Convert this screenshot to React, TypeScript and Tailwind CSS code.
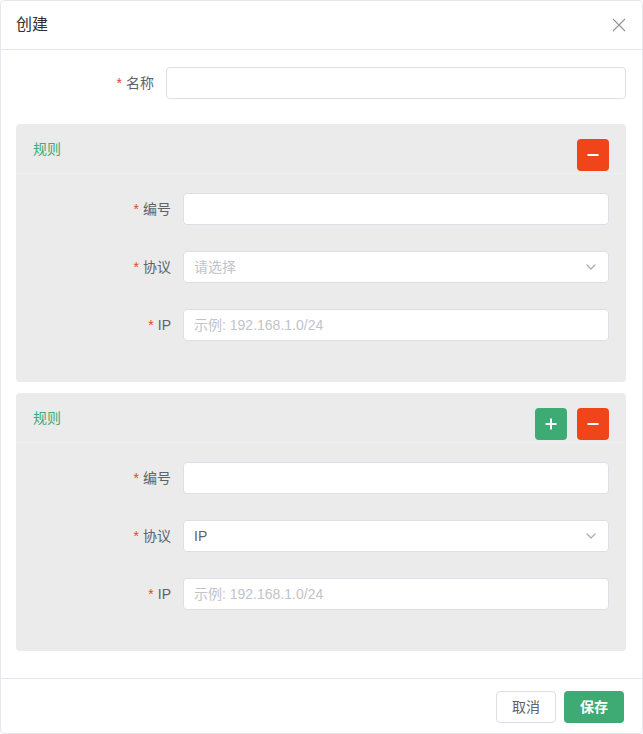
import React from 'react';

const font = { fontFamily: '"Liberation Sans", "Noto Sans CJK SC", Arial, sans-serif' };

const Label: React.FC<{ text: string }> = ({ text }) => (
  <label className="w-[150px] shrink-0 pr-[12px] text-right text-[14px] leading-[32px] text-[#606266]">
    <span className="mr-[4px] text-[#f0441a]">*</span>
    {text}
  </label>
);

const TextInput: React.FC<{ placeholder?: string }> = ({ placeholder }) => (
  <input
    placeholder={placeholder}
    className="h-[32px] flex-1 rounded-[4px] border border-[#dcdfe6] bg-white px-[10px] text-[14px] text-[#606266] outline-none placeholder:text-[#c0c4cc]"
  />
);

const Select: React.FC<{ value?: string }> = ({ value }) => (
  <div className="flex h-[32px] flex-1 items-center justify-between rounded-[4px] border border-[#dcdfe6] bg-white pl-[10px] pr-[12px] text-[14px]">
    <span className={value ? 'text-[#606266]' : 'text-[#c0c4cc]'}>{value || '请选择'}</span>
    <svg width="10" height="6" viewBox="0 0 10 6" fill="none">
      <path d="M1 1l4 4 4-4" stroke="#a8abb2" strokeWidth="1.2" strokeLinecap="round" strokeLinejoin="round" />
    </svg>
  </div>
);

const SquareButton: React.FC<{ kind: 'add' | 'remove' }> = ({ kind }) => (
  <button
    className={`flex h-[32px] w-[32px] items-center justify-center rounded-[4px] ${
      kind === 'add' ? 'bg-[#3eaa74]' : 'bg-[#f0441a]'
    }`}
  >
    <svg width="12" height="12" viewBox="0 0 12 12">
      <path d="M0.5 6h11" stroke="#fff" strokeWidth="2" />
      {kind === 'add' && <path d="M6 0.5v11" stroke="#fff" strokeWidth="2" />}
    </svg>
  </button>
);

const RuleCard: React.FC<{ showAdd?: boolean; protocol?: string }> = ({ showAdd, protocol }) => (
  <div className="rounded-[4px] bg-[#ebebeb]">
    <div className="flex h-[50px] items-start justify-between border-b border-[#efefef] px-[17px] pt-[15px]">
      <span className="text-[14px] leading-[20px] text-[#3eaa74]">规则</span>
      <div className="flex gap-[10px]">
        {showAdd && <SquareButton kind="add" />}
        <SquareButton kind="remove" />
      </div>
    </div>
    <div className="flex flex-col gap-[26px] px-[17px] pt-[19px] pb-[41px]">
      <div className="flex">
        <Label text="编号" />
        <TextInput />
      </div>
      <div className="flex">
        <Label text="协议" />
        <Select value={protocol} />
      </div>
      <div className="flex">
        <Label text="IP" />
        <TextInput placeholder="示例: 192.168.1.0/24" />
      </div>
    </div>
  </div>
);

export default function App() {
  return (
    <div style={font} className="flex h-[734px] w-[643px] flex-col rounded-[4px] border border-[#e4e7ed] bg-white">
      <div className="flex h-[49px] shrink-0 items-center justify-between border-b border-[#e4e7ed] pl-[15px] pr-[16px]">
        <span className="text-[16px] text-[#303133]">创建</span>
        <svg width="14" height="14" viewBox="0 0 14 14">
          <path d="M1 1l12 12M13 1L1 13" stroke="#909399" strokeWidth="1.1" />
        </svg>
      </div>
      <div className="flex flex-1 flex-col pl-[15px] pr-[16px] pt-[17px]">
        <div className="mb-[25px] flex">
          <Label text="名称" />
          <TextInput />
        </div>
        <div className="flex flex-col gap-[11px]">
          <RuleCard />
          <RuleCard showAdd protocol="IP" />
        </div>
      </div>
      <div className="flex h-[55px] shrink-0 items-start justify-end gap-[8px] border-t border-[#e4e7ed] pr-[18px] pt-[12px]">
        <button className="h-[32px] w-[60px] rounded-[4px] border border-[#dcdfe6] bg-white text-[14px] text-[#606266]">
          取消
        </button>
        <button className="h-[32px] w-[60px] rounded-[4px] bg-[#3eaa74] text-[14px] font-bold text-white">
          保存
        </button>
      </div>
    </div>
  );
}
